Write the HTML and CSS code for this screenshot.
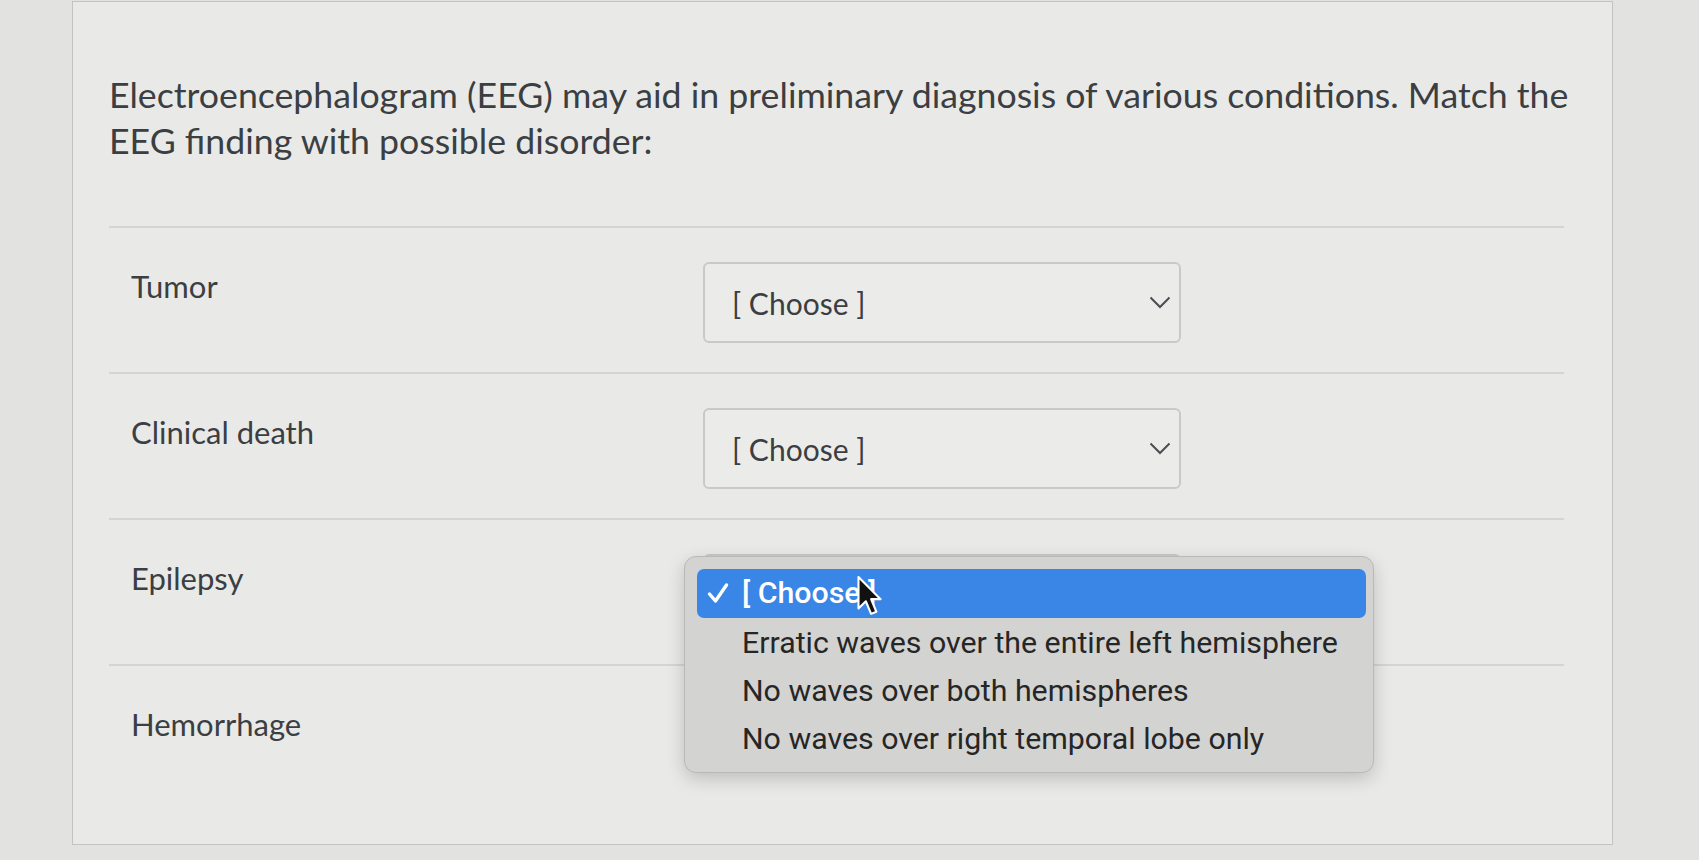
FILE: index.html
```html
<!DOCTYPE html>
<html>
<head>
	<meta charset="utf-8">
	<title>Matching question</title>
	<link rel="stylesheet" href="styles.css">
</head>
<body>
	<div class="card">
		<p class="question">Electroencephalogram (EEG) may aid in preliminary diagnosis of various conditions. Match the EEG finding with possible disorder:</p>

		<div class="answers">
			<div class="row">
				<div class="label">Tumor</div>
				<div class="pick">
					<div class="select">
						<span>[ Choose ]</span>
						<svg class="chev" viewBox="0 0 22 13"><path d="M1.5 1.5 L11 11 L20.5 1.5" /></svg>
					</div>
				</div>
			</div>

			<div class="row">
				<div class="label">Clinical death</div>
				<div class="pick">
					<div class="select">
						<span>[ Choose ]</span>
						<svg class="chev" viewBox="0 0 22 13"><path d="M1.5 1.5 L11 11 L20.5 1.5" /></svg>
					</div>
				</div>
			</div>

			<div class="row">
				<div class="label">Epilepsy</div>
				<div class="pick open">
					<div class="select">
						<span>[ Choose ]</span>
						<svg class="chev" viewBox="0 0 22 13"><path d="M1.5 1.5 L11 11 L20.5 1.5" /></svg>
					</div>

					<!-- native option list, opened -->
					<ul class="menu">
						<li class="current"><svg class="tick" viewBox="0 0 22 22"><path d="M2.5 12 L8.5 19 L19.5 3" /></svg>[ Choose ]</li>
						<li>Erratic waves over the entire left hemisphere</li>
						<li>No waves over both hemispheres</li>
						<li>No waves over right temporal lobe only</li>
					</ul>
					<svg class="cursor" viewBox="0 0 24 40"><path d="M2 2 L2 32 L9 25 L14 37 L19 35 L14 23 L23 23 Z" /></svg>
				</div>
			</div>

			<div class="row last">
				<div class="label">Hemorrhage</div>
				<div class="pick"></div>
			</div>
		</div>
	</div>
</body>
</html>
```

FILE: styles.css
```css
body {
	margin: 0;
	background-color: #e2e3e0;
	color: #3b3e42;
	font-family: Lato, "Open Sans", sans-serif;
}

.card {
	margin: 1px 0 0 72px;
	width: 1541px;
	height: 844px;
	border: 1px solid #c3c4c1;
	background-color: #e9eae7;
	box-sizing: border-box;
}

.question {
	margin: 0;
	padding: 70px 40px 0 36px;
	font-size: 35.7px;
	line-height: 46px;
}

.answers {
	margin: 62px 48px 0 36px;
}

.row {
	display: flex;
	height: 144px;
	border-top: 2px solid #d4d5d2;
}

.row.last {
	height: 180px;
}

.label {
	width: 572px;
	padding: 38px 0 0 22px;
	font-size: 31px;
	line-height: 40px;
}

.pick {
	position: relative;
	padding-top: 34px;
}

.select {
	display: flex;
	align-items: center;
	justify-content: space-between;
	width: 478px;
	height: 81px;
	padding: 0 8px 0 27px;
	box-sizing: border-box;
	border: 2px solid #c9cac7;
	border-radius: 6px;
	background-color: #ebece9;
	font-size: 30px;
}

.chev {
	width: 22px;
	height: 13px;
}

.chev path {
	fill: none;
	stroke: #4a4d52;
	stroke-width: 2;
}

.menu {
	position: absolute;
	left: -19px;
	top: 36px;
	width: 690px;
	margin: 0;
	padding: 12px 7px 9px 12px;
	box-sizing: border-box;
	list-style: none;
	border: 1px solid #b9b9b9;
	border-radius: 12px;
	background-color: #d3d3d2;
	box-shadow: 0 6px 18px rgba(0, 0, 0, 0.18);
	font-family: Roboto, "Noto Sans", sans-serif;
	font-size: 30.3px;
	color: #262626;
}

.menu li {
	height: 48px;
	line-height: 48px;
	padding-left: 45px;
	white-space: nowrap;
}

.menu li.current {
	position: relative;
	height: 49px;
	margin-bottom: 1px;
	border-radius: 7px;
	background-color: #3a86e6;
	color: #ffffff;
	font-weight: 500;
}

.tick {
	position: absolute;
	left: 10px;
	top: 13px;
	width: 22px;
	height: 22px;
}

.tick path {
	fill: none;
	stroke: #ffffff;
	stroke-width: 3.4;
	stroke-linecap: round;
	stroke-linejoin: round;
}

.cursor {
	position: absolute;
	left: 153px;
	top: 55px;
	width: 26px;
	height: 42px;
}

.cursor path {
	fill: #111111;
	stroke: #ffffff;
	stroke-width: 2;
	stroke-linejoin: round;
}
```
